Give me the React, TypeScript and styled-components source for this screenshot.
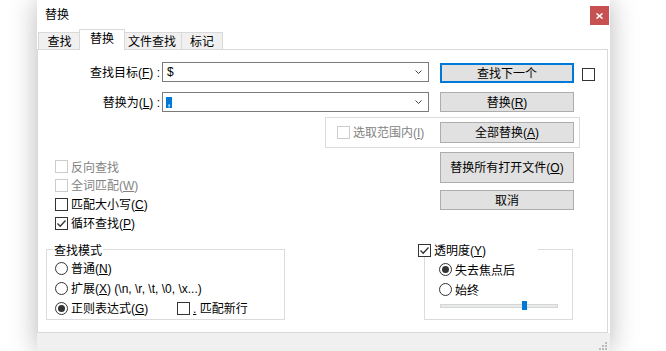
import React from 'react'
import styled, { createGlobalStyle } from 'styled-components'

const FONT = '"Noto Sans CJK SC", "Noto Sans", sans-serif'

const GlobalStyle = createGlobalStyle`
  html, body {
    margin: 0;
    padding: 0;
    background: #fff;
  }
  body {
    font-family: ${FONT};
    font-size: 12px;
    color: #000;
  }
  * {
    box-sizing: border-box;
  }
`

const Screen = styled.div`
  width: 666px;
  height: 351px;
  overflow: hidden;
  padding-left: 37px;
  background: #fff;
`

const Dialog = styled.div`
  width: 573px;
  height: 351px;
  background: #fff;
  display: flex;
  flex-direction: column;
  box-shadow: 0 0 26px rgba(0, 0, 0, 0.28);
`

const TitleBar = styled.div`
  height: 29px;
  display: flex;
  align-items: flex-start;
  justify-content: space-between;
  padding-left: 8px;
`

const Title = styled.span`
  margin-top: 6px;
  line-height: 16px;
`

const CloseButton = styled.button`
  margin-top: 6px;
  margin-right: 1px;
  width: 19px;
  height: 19px;
  padding: 0;
  border: 0;
  background: #c75050;
  display: flex;
  align-items: center;
  justify-content: center;
`

const TabStrip = styled.div`
  height: 21px;
  margin-bottom: -1px;
  padding-left: 1px;
  display: flex;
  align-items: flex-end;
  position: relative;
  z-index: 1;
`

const Tab = styled.div<{ $active?: boolean; $width: number }>`
  width: ${p => p.$width}px;
  height: ${p => (p.$active ? 21 : 17)}px;
  margin-bottom: ${p => (p.$active ? 0 : 1)}px;
  border: 1px solid #d9d9d9;
  border-bottom: none;
  background: ${p => (p.$active ? '#fff' : '#f0f0f0')};
  display: flex;
  justify-content: center;
  align-items: ${p => (p.$active ? 'flex-start' : 'center')};
  padding-top: ${p => (p.$active ? 1 : 0)}px;
  line-height: 14px;
  white-space: nowrap;

  & + & {
    margin-left: -1px;
  }
  ${p => (p.$active ? 'margin-left: -2px !important; margin-right: -2px; position: relative; z-index: 2;' : '')}
`

const Panel = styled.div`
  height: 284px;
  margin-right: 2px;
  border: 1px solid #d9d9d9;
  display: flex;
  flex-direction: column;
`

const Latin = styled.span`
  font-family: "Liberation Sans", sans-serif;
`

const FieldRow = styled.div<{ $top: number }>`
  display: flex;
  align-items: flex-start;
  margin-top: ${p => p.$top}px;
`

const FieldLabel = styled.label`
  width: 124px;
  padding-right: 2px;
  text-align: right;
  line-height: 20px;
  white-space: nowrap;
`

const Combo = styled.div`
  width: 267px;
  height: 20px;
  border: 1px solid #7a7a7a;
  background: #fff;
  display: flex;
  align-items: center;
  padding-left: 4px;
`

const ComboValue = styled(Latin)`
  flex: 1;
  line-height: 14px;
`

const Selected = styled.span`
  display: inline-block;
  margin-left: -1px;
  width: 6px;
  height: 11px;
  line-height: 10px;
  background: #0078d7;
  color: #fff;
  text-align: center;
`

const Chevron = styled.svg`
  margin-right: 6px;
  flex: none;
`

const Button = styled.button<{ $primary?: boolean; $height?: number; $left?: number; $top?: number }>`
  width: 134px;
  height: ${p => p.$height ?? 20}px;
  margin: ${p => p.$top ?? 0}px 0 0 ${p => p.$left ?? 0}px;
  padding: 0;
  flex: none;
  background: #e1e1e1;
  border: ${p => (p.$primary ? '2px solid #0078d7' : '1px solid #adadad')};
  font-family: ${FONT};
  font-size: 12px;
  line-height: 14px;
  color: #000;
`

const Box = styled.span<{ $disabled?: boolean; $round?: boolean }>`
  width: 13px;
  height: 13px;
  flex: none;
  border: 1px solid ${p => (p.$disabled ? '#cccccc' : '#333333')};
  border-radius: ${p => (p.$round ? '50%' : '0')};
  background: #fff;
  display: inline-flex;
  align-items: center;
  justify-content: center;
`

const Dot = styled.span`
  width: 7px;
  height: 7px;
  border-radius: 50%;
  background: #333;
`

const Choice = styled.label<{ $disabled?: boolean; $width?: number }>`
  display: flex;
  align-items: center;
  gap: 3px;
  height: 13px;
  line-height: 13px;
  white-space: nowrap;
  color: ${p => (p.$disabled ? '#838383' : '#000')};
  ${p => (p.$width ? `width: ${p.$width}px; flex: none;` : '')}
`

const ScopeBox = styled.div`
  margin: 4px 0 0 287px;
  width: 255px;
  height: 31px;
  border: 1px solid #dcdcdc;
  display: flex;
  align-items: center;
  padding: 0 5px 0 11px;
  justify-content: space-between;
`

const Lower = styled.div`
  display: flex;
  margin-top: 4px;
`

const LeftCol = styled.div`
  width: 239px;
  margin-left: 8px;
  display: flex;
  flex-direction: column;
`

const OptionList = styled.div`
  display: flex;
  flex-direction: column;
  gap: 6px;
  padding: 8px 0 0 9px;
`

const GroupHead = styled.div<{ $top: number }>`
  height: 13px;
  margin-top: ${p => p.$top}px;
  display: flex;
  align-items: center;
`

const Corner = styled.span<{ $width?: number; $side: 'left' | 'right' }>`
  align-self: stretch;
  margin-top: 6px;
  border-top: 1px solid #dcdcdc;
  border-${p => p.$side}: 1px solid #dcdcdc;
  ${p => (p.$width ? `width: ${p.$width}px; flex: none;` : 'flex: 1;')}
`

const Legend = styled.span`
  padding: 0 1px;
  line-height: 13px;
`

const GroupBody = styled.div<{ $height: number; $left?: number; $pad: number }>`
  height: ${p => p.$height}px;
  margin-left: ${p => p.$left ?? 0}px;
  border: 1px solid #dcdcdc;
  border-top: none;
  display: flex;
  flex-direction: column;
  gap: 7px;
  padding: 6px 0 0 ${p => p.$pad}px;
`

const RadioRow = styled.div`
  display: flex;
  align-items: center;
`

const RightCol = styled.div`
  width: 155px;
  margin-left: 133px;
  display: flex;
  flex-direction: column;
`

const TransHead = styled.div`
  height: 13px;
  margin-top: 34px;
  display: flex;
`

const Slider = styled.div`
  position: relative;
  width: 118px;
  height: 9px;
  margin: -2px 0 0 1px;
  display: flex;
  align-items: center;
`

const Track = styled.div`
  width: 100%;
  height: 4px;
  background: #e7eaea;
  border: 1px solid #d6d6d6;
`

const Thumb = styled.span`
  position: absolute;
  top: 0;
  width: 5px;
  height: 9px;
  background: #0078d7;
`

const StatusStrip = styled.div`
  height: 18px;
  background: #f0f0f0;
  display: flex;
  justify-content: flex-end;
  align-items: flex-end;
  padding: 0 3px 1px 0;
`

// access key in parentheses, e.g. (F)
const Key: React.FC<{ k: string; tail?: string }> = ({ k, tail }) => (
  <Latin>
    (<u>{k}</u>){tail}
  </Latin>
)

const Check: React.FC<{ checked?: boolean; disabled?: boolean }> = ({ checked, disabled }) => (
  <Box $disabled={disabled}>
    {checked && (
      <svg width='11' height='11' viewBox='0 0 11 11'>
        <polyline points='1.5,5.5 4.2,8.3 9.5,2.5' fill='none' stroke='#333' strokeWidth='1.3' />
      </svg>
    )}
  </Box>
)

const Radio: React.FC<{ checked?: boolean }> = ({ checked }) => (
  <Box $round>{checked && <Dot />}</Box>
)

const tabs = [
  { label: '查找', width: 43 },
  { label: '替换', width: 46, active: true },
  { label: '文件查找', width: 60 },
  { label: '标记', width: 42 },
]

const options = [
  { label: <>反向查找</>, disabled: true },
  { label: <>全词匹配<Key k='W' /></>, disabled: true },
  { label: <>匹配大小写<Key k='C' /></> },
  { label: <>循环查找<Key k='P' /></>, checked: true },
]

const ComboArrow = () => (
  <Chevron width='7' height='5' viewBox='0 0 7 5'>
    <polyline points='0.5,0.5 3.5,3.5 6.5,0.5' fill='none' stroke='#444' strokeWidth='1' />
  </Chevron>
)

const App: React.FC = () => {
  const opacity = 0.7
  return (
    <>
      <GlobalStyle />
      <Screen>
        <Dialog>
          <TitleBar>
            <Title>替换</Title>
            <CloseButton aria-label='关闭'>
              <svg width='7' height='6' viewBox='0 0 7 6'>
                <path d='M0.5 0.5 L6.5 5.5 M6.5 0.5 L0.5 5.5' stroke='#fff' strokeWidth='1.6' />
              </svg>
            </CloseButton>
          </TitleBar>

          <TabStrip>
            {tabs.map(t => (
              <Tab key={t.label} $active={t.active} $width={t.width}>
                {t.label}
              </Tab>
            ))}
          </TabStrip>

          <Panel>
            <FieldRow $top={12}>
              <FieldLabel>查找目标<Key k='F' tail=' :' /></FieldLabel>
              <Combo>
                <ComboValue>$</ComboValue>
                <ComboArrow />
              </Combo>
              <Button $primary $left={11} $top={1}>查找下一个</Button>
              <Box style={{ marginLeft: 8, marginTop: 6 }} />
            </FieldRow>

            <FieldRow $top={9}>
              <FieldLabel>替换为<Key k='L' tail=' :' /></FieldLabel>
              <Combo>
                <ComboValue>
                  <Selected>,</Selected>
                </ComboValue>
                <ComboArrow />
              </Combo>
              <Button $left={11}>替换<Key k='R' /></Button>
            </FieldRow>

            <ScopeBox>
              <Choice $disabled>
                <Check disabled />
                <span>选取范围内<Key k='I' /></span>
              </Choice>
              <Button $height={21}>全部替换<Key k='A' /></Button>
            </ScopeBox>

            <Lower>
              <LeftCol>
                <OptionList>
                  {options.map((o, i) => (
                    <Choice key={i} $disabled={o.disabled}>
                      <Check checked={o.checked} disabled={o.disabled} />
                      <span>{o.label}</span>
                    </Choice>
                  ))}
                </OptionList>

                <GroupHead $top={13}>
                  <Corner $side='left' $width={7} />
                  <Legend>查找模式</Legend>
                  <Corner $side='right' />
                </GroupHead>
                <GroupBody $height={64} $pad={8}>
                  <RadioRow>
                    <Choice>
                      <Radio />
                      <span>普通<Key k='N' /></span>
                    </Choice>
                  </RadioRow>
                  <RadioRow>
                    <Choice>
                      <Radio />
                      <span>扩展<Key k='X' tail={' (\\n, \\r, \\t, \\0, \\x...)'} /></span>
                    </Choice>
                  </RadioRow>
                  <RadioRow>
                    <Choice $width={122}>
                      <Radio checked />
                      <span>正则表达式<Key k='G' /></span>
                    </Choice>
                    <Choice>
                      <Check />
                      <span><Latin><u>.</u> </Latin>匹配新行</span>
                    </Choice>
                  </RadioRow>
                </GroupBody>
              </LeftCol>

              <RightCol>
                <Button $height={31} $left={22}>替换所有打开文件<Key k='O' /></Button>
                <Button $left={22} $top={7}>取消</Button>

                <TransHead>
                  <Choice $width={120}>
                    <Check checked />
                    <span>透明度<Key k='Y' /></span>
                  </Choice>
                  <Corner $side='right' style={{ marginTop: 5 }} />
                </TransHead>
                <GroupBody $height={63} $left={6} $pad={14}>
                  <RadioRow>
                    <Choice>
                      <Radio checked />
                      失去焦点后
                    </Choice>
                  </RadioRow>
                  <RadioRow>
                    <Choice>
                      <Radio />
                      始终
                    </Choice>
                  </RadioRow>
                  <Slider>
                    <Track />
                    <Thumb style={{ left: Math.round(opacity * 117) }} />
                  </Slider>
                </GroupBody>
              </RightCol>
            </Lower>
          </Panel>

          <StatusStrip>
            <svg width='8' height='8' viewBox='0 0 8 8'>
              <g fill='#bcbcbc'>
                <rect x='6' y='0' width='2' height='2' />
                <rect x='3' y='3' width='2' height='2' />
                <rect x='6' y='3' width='2' height='2' />
                <rect x='0' y='6' width='2' height='2' />
                <rect x='3' y='6' width='2' height='2' />
                <rect x='6' y='6' width='2' height='2' />
              </g>
            </svg>
          </StatusStrip>
        </Dialog>
      </Screen>
    </>
  )
}

export default App
